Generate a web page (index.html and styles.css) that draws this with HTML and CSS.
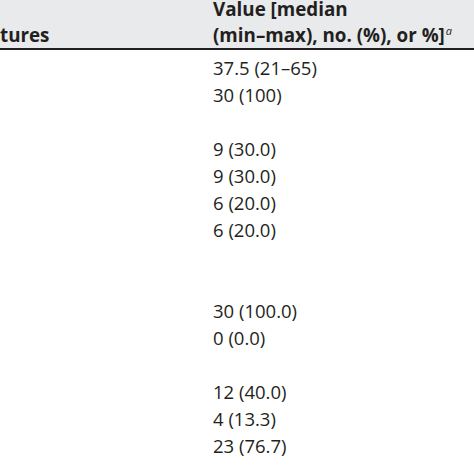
FILE: index.html
```html
<!DOCTYPE html>
<html>
<head>
<meta charset="utf-8">
<link rel="stylesheet" href="styles.css">
</head>
<body>
<div class="table">
  <div class="head">
    <div class="c1">tures</div>
    <div class="c2">Value [median<br>(min–max), no. (%), or %]<sup>a</sup></div>
  </div>
  <div class="body">
    <div class="row"><div class="c1"></div><div class="c2">37.5 (21–65)</div></div>
    <div class="row"><div class="c1"></div><div class="c2">30 (100)</div></div>
    <div class="row"><div class="c1"></div><div class="c2"></div></div>
    <div class="row"><div class="c1"></div><div class="c2">9 (30.0)</div></div>
    <div class="row"><div class="c1"></div><div class="c2">9 (30.0)</div></div>
    <div class="row"><div class="c1"></div><div class="c2">6 (20.0)</div></div>
    <div class="row"><div class="c1"></div><div class="c2">6 (20.0)</div></div>
    <div class="row"><div class="c1"></div><div class="c2"></div></div>
    <div class="row"><div class="c1"></div><div class="c2"></div></div>
    <div class="row"><div class="c1"></div><div class="c2">30 (100.0)</div></div>
    <div class="row"><div class="c1"></div><div class="c2">0 (0.0)</div></div>
    <div class="row"><div class="c1"></div><div class="c2"></div></div>
    <div class="row"><div class="c1"></div><div class="c2">12 (40.0)</div></div>
    <div class="row"><div class="c1"></div><div class="c2">4 (13.3)</div></div>
    <div class="row"><div class="c1"></div><div class="c2">23 (76.7)</div></div>
  </div>
</div>
</body>
</html>
```
FILE: styles.css
```css
html, body {
  margin: 0;
  padding: 0;
  background: #ffffff;
}
body {
  width: 474px;
  height: 474px;
  overflow: hidden;
  font-family: "Open Sans", "Liberation Sans", sans-serif;
  font-size: 18.5px;
  color: #231f20;
}
.table {
  display: flex;
  flex-direction: column;
}
.head {
  height: 48px;
  background: #e8eaeb;
  display: flex;
  align-items: flex-end;
  overflow: hidden;
  border-bottom: 2px solid #231f20;
  font-weight: 700;
  font-size: 18.8px;
  line-height: 26px;
}
.c1 {
  width: 213px;
  flex: none;
  white-space: nowrap;
}
.c2 {
  flex: 1;
  white-space: nowrap;
}
sup {
  font-style: italic;
  font-weight: 400;
  font-size: 11px;
  line-height: 0;
  vertical-align: 7px;
  margin-left: 1px;
}
.body {
  padding-top: 4px;
}
.row {
  display: flex;
  height: 27px;
  line-height: 27px;
}
```
